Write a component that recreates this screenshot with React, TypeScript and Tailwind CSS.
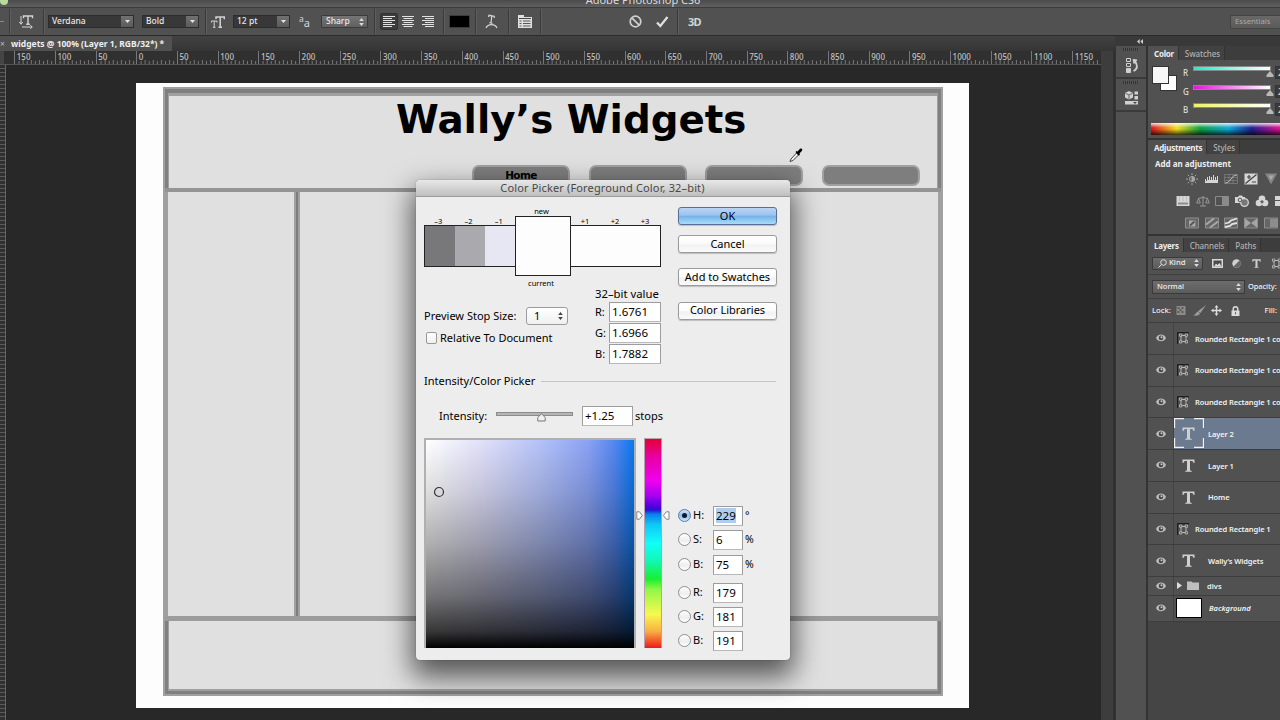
import React from "react";

const TICKS = [4.07, 8.14, 12.21, 16.28, 20.35, 24.42, 28.49, 32.56, 36.63];

function Sep({ className }: { className: string }) {
  return <div className={`h-[25px] w-[2px] shrink-0 border-l border-[#3a3a3a] bg-[#5e5e5e] ${className}`} />;
}

function Combo({ label, className }: { label: string; className: string }) {
  return (
    <div className={`flex h-[13px] shrink-0 items-center border border-[#2c2c2c] bg-[#383838] ${className}`}>
      <span className="flex-1 pl-[3px] text-[8.500px] font-medium leading-none text-[#e8e8e8]">{label}</span>
      <span className="flex h-full w-[12px] items-center justify-center bg-gradient-to-b from-[#717171] to-[#5b5b5b]">
        <svg width="5" height="3" viewBox="0 0 5 3"><path d="M0 0h5L2.5 3z" fill="#e6e6e6" /></svg>
      </span>
    </div>
  );
}

function UpDown({ fill = "#dcdcdc" }: { fill?: string }) {
  return (
    <svg width="5" height="8" viewBox="0 0 5 8" className="shrink-0">
      <path d="M2.5 0L4.8 3H.2zM2.5 8L.2 5h4.6z" fill={fill} />
    </svg>
  );
}

function Align({ kind }: { kind: "l" | "c" | "r" }) {
  const widths = [12, 9, 12, 9, 12, 9];
  return (
    <svg width="12" height="12" viewBox="0 0 12 12">
      {widths.map((w, i) => (
        <rect key={i} x={kind === "l" ? 0 : kind === "c" ? (12 - w) / 2 : 12 - w} y={i * 2} width={w} height="1" fill="#e2e2e2" />
      ))}
    </svg>
  );
}

function OptionsBar() {
  return (
    <div className="flex h-[28px] items-center border-b border-[#2b2b2b] bg-[#515151]">
      <div className="h-px w-[4px] bg-[#8c8c8c]" />
      <Sep className="ml-[5px]" />
      <svg className="ml-[8px] shrink-0" width="15" height="14" viewBox="0 0 15 14" fill="none" stroke="#d4d4d4">
        <path d="M4.5 3.200V1h9v2.200M9 1v8.500M7.200 9.300h3.600" strokeWidth="1.400" />
        <path d="M2 1v8M.3 7L2 9.300 3.700 7M3 12h10M11.300 10.300L13.300 12l-2 1.700" />
      </svg>
      <Sep className="ml-[9px]" />
      <Combo label="Verdana" className="ml-[3px] w-[86px]" />
      <Combo label="Bold" className="ml-[8px] w-[57px]" />
      <Sep className="ml-[6px]" />
      <svg className="ml-[4px] shrink-0" width="14" height="12" viewBox="0 0 14 12" fill="none" stroke="#d4d4d4">
        <path d="M5 3V1h8.300v2.300M9.200 1v10M7.500 11.300h3.500" strokeWidth="1.500" />
        <path d="M.5 6.500V5h5.500v1.500M3.200 5v6M2 11.300h2.500" />
      </svg>
      <Combo label="12 pt" className="ml-[8px] w-[57px]" />
      <div className="ml-[9px] flex w-[12px] shrink-0 items-center text-[8.500px] leading-none text-[#d4d4d4]">
        <span className="pb-[4px]">a</span><span className="pt-[2px] text-[11px]">a</span>
      </div>
      <div className="ml-[10px] flex h-[13px] w-[47px] shrink-0 items-center justify-between rounded-[1px] border border-[#3b3b3b] bg-gradient-to-b from-[#757575] to-[#606060] pl-[4px] pr-[3px]">
        <span className="text-[8.500px] font-medium leading-none text-[#e8e8e8]">Sharp</span>
        <UpDown />
      </div>
      <Sep className="ml-[6px]" />
      <div className="ml-[4px] flex h-[17px] w-[18px] shrink-0 items-center justify-center rounded-[2px] border border-[#303030] bg-[#3c3c3c]"><Align kind="l" /></div>
      <div className="ml-[4px] flex w-[13px]"><Align kind="c" /></div>
      <div className="ml-[7px] flex w-[13px]"><Align kind="r" /></div>
      <Sep className="ml-[8px]" />
      <div className="ml-[4px] h-[13px] w-[21px] shrink-0 border border-[#3c3c3c] bg-black" />
      <Sep className="ml-[5px]" />
      <svg className="ml-[8px] shrink-0" width="13" height="15" viewBox="0 0 13 15" fill="none" stroke="#d4d4d4" strokeWidth="1.200">
        <path d="M3.500 3L4 1.300l5.500 1M9.200 4l.3-1.700M6.800 2L6 9M4.500 8.700l3 .6M1 14c2-4.500 9-4.500 11 0" />
      </svg>
      <Sep className="ml-[10px]" />
      <svg className="ml-[8px] shrink-0" width="14" height="13" viewBox="0 0 14 13">
        <path d="M0 0h6v2h8v11H0z" fill="#e0e0e0" />
        <path d="M1 3.500h12" stroke="#484848" />
        <path d="M1.500 6h2M5 6h7.500M1.500 8.500h2M5 8.500h7.500M1.500 11h2M5 11h7.500" stroke="#585858" />
      </svg>
      <Sep className="ml-[8px]" />
      <svg className="ml-[87px] shrink-0" width="13" height="13" viewBox="0 0 13 13" fill="none" stroke="#d0d0d0" strokeWidth="1.700">
        <circle cx="6.500" cy="6.500" r="5.300" /><path d="M2.800 2.800l7.400 7.400" />
      </svg>
      <svg className="ml-[14px] shrink-0" width="13" height="12" viewBox="0 0 13 12" fill="none" stroke="#dedede" strokeWidth="2.300">
        <path d="M1 6.500l3.300 3.500L11.500 1" />
      </svg>
      <Sep className="ml-[8px]" />
      <span className="ml-[9px] w-[14px] text-[11px] font-bold leading-none tracking-[-0.8px] text-[#d4d4d4]">3D</span>
      <div className="ml-auto flex h-[14px] w-[50px] items-center rounded-l-[2px] border border-r-0 border-[#444] bg-gradient-to-b from-[#686868] to-[#5b5b5b] pl-[4px] text-[7.700px] leading-none text-[#aaa]">Essentials</div>
    </div>
  );
}

function Ruler() {
  return (
    <div className="flex h-[14px] w-[1101px] overflow-hidden border-b border-[#555] bg-[#303030]">
      <div className="w-[14.300px] shrink-0 border-l-4 border-[#444]" />
      {Array.from({ length: 27 }, (_, i) => (
        <div key={i} className="relative h-[14px] w-[40.700px] shrink-0 border-l border-[#777] pl-[1.500px] text-[8px] font-medium leading-[12px] text-[#c0c0c0]">
          {Math.abs((i - 3) * 50)}
          <svg className="absolute bottom-[1px] left-0" width="40" height="4" viewBox="0 0 40 4">
            {TICKS.map((x, k) => <rect key={k} x={x - 0.5} y={k % 2 ? 0 : 1} width="1" height="4" fill="#777" />)}
          </svg>
        </div>
      ))}
    </div>
  );
}

function NavButton({ label }: { label?: string }) {
  return (
    <div className="h-[21px] w-[98px] rounded-[7px] border-2 border-[#a0a0a0] bg-[#7e7e7f] pt-[2px] text-center font-['DejaVu_Sans',sans-serif] text-[10.500px] font-bold leading-[13px] tracking-[-0.6px] text-black">{label}</div>
  );
}

function Canvas() {
  return (
    <div className="ml-[130px] mt-[18px] h-[625px] w-[833px] bg-[#fdfdfd] pl-[27px] pt-[4px]">
      <div className="flex h-[609px] w-[780px] flex-col border-2 border-[#a0a0a0] bg-[#e0e0e0]">
        <div className="h-[99px] border-x-[3px] border-t-[4px] border-[#808080]">
          <div className="h-[95px] border-x-[1px] border-t-[3px] border-[#a0a0a0]">
            <h1 className="pl-[227px] pt-[1px] font-['DejaVu_Sans',sans-serif] text-[38.800px] font-bold leading-[46px] text-black">
              <span className="whitespace-nowrap">Wally’s Widgets</span>
            </h1>
            <div className="ml-[303px] mt-[22px] flex gap-[18.500px]">
              <NavButton label="Home" /><NavButton /><NavButton /><NavButton />
            </div>
          </div>
        </div>
        <div className="h-[4px] bg-[#949494]" />
        <div className="flex h-[424px] border-x-[3px] border-[#a0a0a0]">
          <div className="w-[126px]" />
          <div className="w-[6px] border-x-2 border-[#a0a0a0] bg-[#7e7e7e]" />
          <div className="flex-1" />
        </div>
        <div className="h-[5px] bg-[#9c9c9c]" />
        <div className="flex-1 border-x-[3px] border-b-[3px] border-[#808080]">
          <div className="h-full border-x-[1px] border-b-2 border-[#a0a0a0]" />
        </div>
      </div>
    </div>
  );
}

function Btn({ label, primary }: { label: string; primary?: boolean }) {
  return (
    <div className={`flex h-[18px] w-[99px] items-center justify-center rounded-[3px] border pb-[2px] text-[11px] leading-none text-black shadow-[0_1px_1px_rgba(0,0,0,.2)] ${primary ? "border-[#5a6f95] bg-[linear-gradient(#bcd3f4,#9cc3f0_45%,#74b1e8_50%,#a9dcf8)]" : "border-[#9b9b9b] bg-[linear-gradient(#fff,#fbfbfb_50%,#f1f1f1_55%,#fbfbfb)]"}`}>{label}</div>
  );
}

function Field({ value, className, selected }: { value: string; className: string; selected?: boolean }) {
  return (
    <div className={`flex h-[20px] items-center border-[1.500px] border-[#9c9c9c] border-b-[#b8b8b8] bg-white pl-[2px] text-[11.500px] leading-none text-black ${className}`}>
      <span className={selected ? "bg-[#b1cdee] py-[1px] leading-[13px]" : ""}>{value}</span>
    </div>
  );
}

function Stops({ labels, fills, className }: { labels: string[]; fills: string[]; className: string }) {
  return (
    <div className={`flex shrink-0 flex-col ${className}`}>
      <div className="flex h-[9px] text-[7.500px] leading-[11px] text-black">
        {labels.map((l) => <span key={l} className="flex-1 pr-[2px] text-center">{l}</span>)}
      </div>
      <div className="flex h-[42px] border-y border-[#222]">
        {fills.map((f, i) => <div key={i} className={`flex-1 ${f}`} />)}
      </div>
    </div>
  );
}

function Radio({ on }: { on?: boolean }) {
  return (
    <div className={`flex h-[13px] w-[13px] items-center justify-center rounded-full border ${on ? "border-[#5f7ba6] bg-[linear-gradient(#d3e4f8,#8fc0f0_50%,#c2eaff)]" : "border-[#8f8f8f] bg-[linear-gradient(#fff,#eee_60%,#fff)]"}`}>
      {on && <div className="h-[5px] w-[5px] rounded-full bg-[#101828]" />}
    </div>
  );
}

function Channel({ label, value, unit, on, className }: { label: string; value: string; unit?: string; on?: boolean; className?: string }) {
  return (
    <div className={`flex h-[20px] items-center ${className ?? ""}`}>
      <Radio on={on} />
      <span className="w-[22px] pb-[2px] pl-[2px] text-[11px] leading-none">{label}</span>
      <Field value={value} className="w-[30px]" selected={on} />
      <span className="pl-[2px] text-[10.500px] leading-none">{unit}</span>
    </div>
  );
}

function ColorPicker() {
  return (
    <div className="absolute left-[416px] top-[180px] h-[480px] w-[374px] rounded-[4px] bg-[#ededed] text-[11px] text-black shadow-[0_13px_28px_4px_rgba(0,0,0,.62),0_0_1px_rgba(0,0,0,.6)]">
      <div className="h-[17px] rounded-t-[4px] border-b border-[#9c9c9c] bg-gradient-to-b from-[#e8e8e8] to-[#bfbfbf] pr-[1px] text-center text-[11px] leading-[16px] tracking-[0.15px] text-[#484848]">Color Picker (Foreground Color, 32–bit)</div>
      <div className="flex h-[176px] pl-[8px]">
        <div className="w-[237px] shrink-0 pt-[10px]">
          <div className="flex h-[82px]">
            <Stops className="w-[91px] pt-[9px] [&>div:last-child]:border-l" labels={["–3", "–2", "–1"]} fills={["bg-[#78787b]", "bg-[#a9a9ae]", "bg-[#e7e7f3]"]} />
            <div className="flex w-[56px] shrink-0 flex-col text-center text-[7.500px] leading-[9px]">
              <span className="h-[9px] pr-[3px] leading-[9px]">new</span>
              <div className="h-[60px] border border-[#222] bg-[#fdfdfd]" />
              <span className="pr-[4px] pt-[3px]">current</span>
            </div>
            <Stops className="w-[90px] pt-[9px] [&>div:last-child]:border-r" labels={["+1", "+2", "+3"]} fills={["bg-[#fdfdfd]", "bg-[#fdfdfd]", "bg-[#fdfdfd]"]} />
          </div>
          <div className="flex">
            <div className="w-[171px] shrink-0 pt-[18px]">
              <div className="flex h-[18px] items-center">
                <span className="w-[102px] whitespace-nowrap pb-[2px] leading-none">Preview Stop Size:</span>
                <div className="flex h-[18px] w-[42px] items-center justify-between rounded-[3px] border border-[#9c9c9c] bg-gradient-to-b from-white to-[#f0f0f0] pl-[7px] pr-[4px] leading-none"><span className="pb-[1px]">1</span><UpDown fill="#444" /></div>
              </div>
              <div className="mt-[7px] flex h-[12px] items-center">
                <div className="ml-[2px] h-[12px] w-[11px] rounded-[2px] border border-[#999] bg-gradient-to-b from-white to-[#f0f0f0]" />
                <span className="whitespace-nowrap pb-[2px] pl-[3px] leading-none">Relative To Document</span>
              </div>
            </div>
            <div className="flex flex-col">
              <span className="h-[12px] whitespace-nowrap text-[11.300px] leading-[9px]">32–bit value</span>
              {[["R:", "1.6761"], ["G:", "1.6966"], ["B:", "1.7882"]].map(([k, v]) => (
                <div key={k} className="flex h-[21px] items-center"><span className="w-[14px] leading-none">{k}</span><Field value={v} className="w-[52px]" /></div>
              ))}
            </div>
          </div>
        </div>
        <div className="flex flex-col pl-[17px] pt-[10px]">
          <Btn label="OK" primary />
          <div className="mt-[10px]"><Btn label="Cancel" /></div>
          <div className="mt-[15px]"><Btn label="Add to Swatches" /></div>
          <div className="mt-[15.500px]"><Btn label="Color Libraries" /></div>
        </div>
      </div>
      <div className="flex h-[16px] items-center pl-[8px] pr-[14px]">
        <span className="w-[117px] whitespace-nowrap pb-[2px] leading-none">Intensity/Color Picker</span>
        <div className="h-px flex-1 bg-[#c4c4c4]" />
      </div>
      <div className="mt-[17px] flex h-[20px] items-center pl-[23px]">
        <span className="w-[57px] pb-[2px] leading-none">Intensity:</span>
        <div className="relative mb-[4px] h-[4px] w-[77px] border border-[#8c8c8c] bg-[#b5b5b5]">
          <svg className="absolute left-[40px] top-0" width="9" height="9" viewBox="0 0 9 9"><path d="M4.500.7L8.200 4.500V8H.8V4.500z" fill="#f0f0f0" stroke="#777" /></svg>
        </div>
        <Field value="+1.25" className="ml-[9px] w-[51px]" />
        <span className="pb-[2px] pl-[2px] leading-none">stops</span>
      </div>
      <div className="mt-[12px] flex h-[211px] pl-[8px]">
        <div className="relative h-[210px] w-[212px] border-2 border-b-0 border-[#b0b0b0] bg-[linear-gradient(rgba(0,0,0,0),rgba(0,0,0,.13)_25%,rgba(0,0,0,.31)_50%,rgba(0,0,0,.54)_75%,rgba(0,0,0,.78)_92%,#000),linear-gradient(90deg,#fff,#dfdffa_28%,#b4c2f8_55%,#8aa2f4_78%,#5788f0_90%,#0a78f0)]">
          <svg className="absolute left-[7px] top-[46px]" width="12" height="12" viewBox="0 0 12 12"><circle cx="6" cy="6" r="4.500" fill="none" stroke="#333" strokeWidth="1.200" /></svg>
        </div>
        <svg className="mt-[73px] shrink-0" width="8" height="9" viewBox="0 0 8 9"><path d="M.8.800h2.700L6.300 4.500 3.500 8.200H.8z" fill="#fff" stroke="#777" strokeWidth=".9" /></svg>
        <div className="h-[210px] w-[18px] border border-b-0 border-[#b9a0b0] bg-[linear-gradient(#e60030,#e8009c_8%,#f000f0_20%,#a800f0_27%,#5500e0_32%,#2a10d8_34%,#0880e8_36%,#10c8f8_41%,#10fff8_50%,#10f8b8_58%,#18f030_67%,#90f848_72%,#f8f850_84%,#f8b040_92%,#f01818)]" />
        <svg className="mt-[73px] shrink-0" width="8" height="9" viewBox="0 0 8 9"><path d="M7 .800H4.300L1.500 4.500l2.800 3.700H7z" fill="#fff" stroke="#777" strokeWidth=".9" /></svg>
        <div className="pl-[8px] pt-[67.500px]">
          <Channel label="H:" value="229" unit="°" on />
          <Channel label="S:" value="6" unit="%" className="mt-[4px]" />
          <Channel label="B:" value="75" unit="%" className="mt-[5px]" />
          <Channel label="R:" value="179" className="mt-[8px]" />
          <Channel label="G:" value="181" className="mt-[4px]" />
          <Channel label="B:" value="191" className="mt-[4px]" />
        </div>
      </div>
    </div>
  );
}

function Tabs({ items }: { items: string[] }) {
  return (
    <div className="flex h-[14px] shrink-0 bg-[#3d3d3d] text-[8px] leading-[15px]">
      {items.map((t, i) => (
        <span key={t} className={`whitespace-nowrap border-r border-[#333] pl-[6px] ${i === 0 ? "bg-[#515151] pr-[4px] font-bold tracking-[-0.25px] text-[#eee]" : "bg-[#424242] pr-[4px] font-medium tracking-[-0.1px] text-[#b0b0b0]"}`}>{t}</span>
      ))}
    </div>
  );
}

function Slider({ label, grad }: { label: string; grad: string }) {
  return (
    <div className="flex h-[18.700px] items-start text-[8px] text-[#ddd]">
      <span className="w-[10px] pt-[2px] font-medium leading-[9px]">{label}</span>
      <div className="w-[78px] shrink-0">
        <div className={`h-[5px] border border-[#888] ${grad}`} />
        <svg className="ml-[73px]" width="8" height="6" viewBox="0 0 8 6"><path d="M4 0l3.500 4v2h-7V4z" fill="#b8b8b8" /></svg>
      </div>
      <div className="ml-[4px] h-[13px] w-[12px] shrink-0 border border-[#333] bg-[#3b3b3b] pl-[2px] leading-[11px]">2</div>
    </div>
  );
}

function AdjIcon({ n }: { n: number }) {
  const c = "#d6d6d6";
  const d = "#8b8b8b";
  return (
    <svg width="14" height="12" viewBox="0 0 14 12" fill="none" className="shrink-0">
      {n === 0 && <g stroke="#a8a8a8"><circle cx="7" cy="6" r="2.500" /><path d="M7 3.500a2.500 2.500 0 0 1 0 5z" fill="#a8a8a8" /><path d="M7 0v2M7 10v2M1 6h2M11 6h2M2.800 1.800l1.400 1.400M9.800 8.800l1.400 1.400M2.800 10.200l1.400-1.400M9.800 3.200l1.400-1.400" /></g>}
      {n === 1 && <path d="M0 10V6h1v2h1V4h1v3h1V3h1v4h1V4h1v3h1V2h1v5h1V4h1v3h1V3h1v7z" fill={c} />}
      {n === 2 && <g stroke={d}><path d="M.5 1.500h13v9H.5zM.5 4.500h13M.5 7.500h13M5 1.500v9M9 1.500v9" strokeWidth=".6" /><path d="M1 10c6 0 6-8 12-8" stroke="#bbb" /></g>}
      {n === 3 && <g><path d="M.5.500h13v11H.5z" fill={c} /><path d="M1.500 10.500l11-9M3 4h4M5 2v4M8 9h4" stroke="#444" strokeWidth="1.200" /></g>}
      {n === 4 && <g><path d="M1 .500h12L7 11.500z" fill="#858585" /><path d="M4.500 2.500h5L7 7.500z" fill="#aaa" /></g>}
      {n === 5 && <g><path d="M.5 1h13v10H.5z" fill={c} /><path d="M3.500 6V1M7 6V1M10.500 6V1" stroke="#bbb" /><path d="M2 8.500h10" stroke="#8c8c8c" strokeWidth="2" /></g>}
      {n === 6 && <path d="M7 1v10M4 11h6M2 3.500l5-1 5 1M2.500 3.500L.7 8h3.600zM11.500 3.500L9.700 8h3.600z" stroke="#989898" />}
      {n === 7 && <g><path d="M.5 1.500h13v9H.5z" stroke={d} /><path d="M7 1.500h6v9H7z" fill={d} /></g>}
      {n === 8 && <g><path d="M0 2h3l1-1.500h3L8 2h2v6H0z" fill={c} /><circle cx="9.500" cy="7.500" r="3.800" fill="#777" stroke={c} strokeWidth="1.300" /><circle cx="5" cy="5" r="1.800" stroke="#555" /></g>}
      {n === 9 && <g fill={c}><circle cx="7" cy="3.700" r="3.300" /><circle cx="4" cy="8" r="3.300" /><circle cx="10" cy="8" r="3.300" /><path d="M5 6.500l2-1.500 2 1.500L7 9z" fill="#666" /></g>}
      {n === 10 && <path d="M1 1h5v4H1zM7 1h5v4H7zM1 6h5v5H1zM7 6h5v5H7z" fill={c} />}
      {n > 10 && <path d="M.5 1h13v10H.5z" stroke="#8f8f8f" fill="#666" />}
      {n === 11 && <g><path d="M4 3.500h6.500v6H4z" fill="#aaa" /><path d="M5 8.500l4.500-4" stroke="#555" strokeWidth="1.800" /></g>}
      {n === 12 && <path d="M1 7.500L9 1.500M5 10.500l8-6" stroke="#a8a8a8" strokeWidth="2" />}
      {n === 13 && <path d="M1 6.500l4-1 2-2 6-2M1 10l5-1 2-2 5-1" stroke="#e2e2e2" strokeWidth="1.800" />}
      {n === 14 && <path d="M1 1.500L7 6l6-4.500v9L7 6l-6 4.500z" fill="#a5a5a5" />}
      {n === 15 && <path d="M6 2h7v8H6z" fill="#8d8d8d" />}
    </svg>
  );
}

function Eye() {
  return (
    <svg width="10" height="8" viewBox="0 0 10 8" className="shrink-0">
      <path d="M0 4C2-.6 8-.6 10 4 8 8.300 2 8.300 0 4z" fill="#bdbdbd" /><circle cx="5" cy="3.900" r="2.300" fill="#484848" /><circle cx="5.500" cy="3.300" r="1" fill="#ccc" />
    </svg>
  );
}

function EyeCell() {
  return <div className="flex h-full w-[26px] shrink-0 items-center justify-center border-r border-[#434343]"><Eye /></div>;
}

function BigT({ size }: { size: number }) {
  return (
    <svg width={size} height={size} viewBox="0 0 13 13" className="shrink-0">
      <path d="M.5.500h12v3.500h-1C11.200 2.300 10.500 2 8 2v8.800c0 .8.500 1 1.800 1.200v.7H3.200V12c1.300-.2 1.800-.4 1.800-1.200V2c-2.500 0-3.200.3-3.500 2h-1z" fill="#cfcfcf" />
    </svg>
  );
}

function ShapeIcon({ dark }: { dark?: boolean }) {
  return (
    <svg width="12" height="12" viewBox="0 0 12 12" className="shrink-0" fill="none">
      {dark && <path d="M.5 12V.5H12" stroke="#1e1e1e" strokeWidth="1.300" />}
      <path d="M4 3.500h5v6H4z" stroke="#b8b8b8" />
      <path d="M2.500 2h2.300v2.300H2.500zM8.200 2h2.300v2.300H8.200zM2.500 8.700h2.300V11H2.500zM8.200 8.700h2.300V11H8.200z" fill="#565656" stroke="#c8c8c8" strokeWidth=".7" />
    </svg>
  );
}

function Layer({ name, kind, active }: { name: string; kind: "shape" | "text"; active?: boolean }) {
  return (
    <div className="flex h-[31.750px] shrink-0 items-center border-b border-[#3d3d3d]">
      <EyeCell />
      <div className={`flex h-full flex-1 items-center ${active ? "bg-[#6b7a8f]" : ""}`}>
        {kind === "shape" ? (
          <div className="w-[21px] shrink-0 pl-[3px]"><ShapeIcon dark /></div>
        ) : (
          <div className="relative flex h-full w-[34px] shrink-0 items-center pl-[8px]">
            {active && (
              <svg className="absolute left-0 top-0" width="30" height="30" viewBox="0 0 30 30" fill="none"><path d="M.5 10V.5H10M20 .5h9.500V10M29.500 20v9.500H20M10 29.500H.5V20" stroke="#f2f2f2" strokeWidth="1.300" /></svg>
            )}
            <BigT size={13} />
          </div>
        )}
        <span className="whitespace-nowrap pt-[2px] text-[7.500px] font-semibold leading-none tracking-[-0.1px] text-[#f2f2f2]">{name}</span>
      </div>
    </div>
  );
}

function Panels() {
  return (
    <div className="flex w-[132px] shrink-0 flex-col overflow-hidden bg-[#515151]">
      <Tabs items={["Color", "Swatches"]} />
      <div className="flex h-[63px] shrink-0 pl-[4px] pt-[6px]">
        <div className="relative h-[26px] w-[31px] shrink-0">
          <div className="absolute left-[8px] top-[9px] h-[16px] w-[17px] border border-[#333] bg-white" />
          <div className="absolute left-0 top-0 h-[18px] w-[17px] border border-[#333] bg-[#f7f7f7]" />
        </div>
        <div className="shrink-0">
          <Slider label="R" grad="bg-[linear-gradient(90deg,#18f0d0,#fff)]" />
          <Slider label="G" grad="bg-[linear-gradient(90deg,#e018d8,#fff)]" />
          <Slider label="B" grad="bg-[linear-gradient(90deg,#f0f060,#fff)]" />
        </div>
      </div>
      <div className="ml-[3px] h-[12px] shrink-0 bg-[linear-gradient(rgba(255,255,255,.85),rgba(255,255,255,0)_40%,rgba(0,0,0,0)_50%,rgba(0,0,0,.75)),linear-gradient(90deg,#e01020,#f0e020_20%,#10a040_38%,#10a8d8_60%,#202090_78%,#e01090)]" />
      <div className="h-[5px] shrink-0 border-b-2 border-[#333]" />
      <Tabs items={["Adjustments", "Styles"]} />
      <div className="h-[82px] shrink-0 border-b-2 border-[#333]">
        <div className="h-[19px] pl-[7px] text-[8px] font-bold leading-[19px] text-[#eee]">Add an adjustment</div>
        <div className="flex gap-[5.700px] pl-[37px]">{[0, 1, 2, 3, 4].map((n) => <AdjIcon key={n} n={n} />)}</div>
        <div className="mt-[10px] flex gap-[5.700px] pl-[28px]">{[5, 6, 7, 8, 9, 10].map((n) => <AdjIcon key={n} n={n} />)}</div>
        <div className="mt-[10px] flex gap-[5.700px] pl-[37px]">{[11, 12, 13, 14, 15].map((n) => <AdjIcon key={n} n={n} />)}</div>
      </div>
      <div className="h-[2px] shrink-0" />
      <Tabs items={["Layers", "Channels", "Paths"]} />
      <div className="flex h-[23px] shrink-0 items-center border-b border-[#404040] pl-[4px]">
        <div className="flex h-[13px] w-[51px] shrink-0 items-center rounded-[1px] border border-[#3a3a3a] bg-gradient-to-b from-[#6d6d6d] to-[#5c5c5c] pl-[5px] pr-[3px] text-[7.700px] font-medium leading-none text-[#eee]">
          <svg width="9" height="9" viewBox="0 0 9 9" fill="none" stroke="#ddd" className="mr-[2px]"><circle cx="5.500" cy="3.500" r="2.800" /><path d="M3.500 5.500L.5 8.500" /></svg>
          <span className="flex-1">Kind</span><UpDown />
        </div>
        <svg className="ml-[9px] shrink-0" width="11" height="9" viewBox="0 0 11 9"><path d="M0 0h11v9H0z" fill="#d8d8d8" /><path d="M1.500 1.500h8v6h-8z" fill="#4a4a4a" /><path d="M2 7.500l2-3 1.500 1.500L7.500 4l2 3.500z" fill="#ddd" /></svg>
        <svg className="ml-[9px] shrink-0" width="9" height="9" viewBox="0 0 9 9"><circle cx="4.500" cy="4.500" r="4.200" fill="#d0d0d0" /><path d="M1.600 7.400A4 4 0 0 0 7.400 1.600z" fill="#666" /></svg>
        <div className="ml-[11px] shrink-0"><BigT size={9} /></div>
        <div className="ml-[9px] shrink-0"><ShapeIcon /></div>
      </div>
      <div className="flex h-[24px] shrink-0 items-center border-b border-[#404040] pl-[4px]">
        <div className="flex h-[14px] w-[93px] shrink-0 items-center justify-between border border-[#3a3a3a] bg-gradient-to-b from-[#6d6d6d] to-[#5c5c5c] pl-[4px] pr-[3px] text-[7.500px] font-medium leading-none text-[#eee]">Normal<UpDown /></div>
        <span className="pl-[3px] pt-[1px] text-[7.500px] font-medium leading-none tracking-[-0.1px] text-[#eee]">Opacity:</span>
      </div>
      <div className="flex h-[24px] shrink-0 items-center border-b border-[#3d3d3d] pl-[4px] text-[7.700px] font-medium leading-none text-[#eee]">
        <span className="w-[24px]">Lock:</span>
        <svg width="10" height="9" viewBox="0 0 9 9"><path d="M0 0h9v9H0z" fill="#8c8c8c" /><path d="M1 1h2v2H1zM5 1h2v2H5zM3 3h2v2H3zM1 5h2v2H1zM5 5h2v2H5z" fill="#5c5c5c" /></svg>
        <svg className="ml-[7px]" width="13" height="11" viewBox="0 0 13 11"><path d="M13 0L7.500 8 5 6.200zM5 6.500l2 2C6 10.800 3 11 0 10.300 3 9.500 3 7 5 6.500z" fill="#9c9c9c" /></svg>
        <svg className="ml-[5px]" width="11" height="11" viewBox="0 0 11 11"><path d="M5.500 0L7.500 2.500h-1.300v2.300h2.300V3.500L11 5.500l-2.500 2V6.200H6.200v2.300h1.300L5.500 11 3.500 8.500h1.300V6.200H2.500v1.300L0 5.500l2.500-2v1.300h2.300V2.500H3.500z" fill="#dcdcdc" /></svg>
        <svg className="ml-[9px]" width="9" height="10" viewBox="0 0 9 10"><path d="M2.200 5V3a2.300 2.300 0 0 1 4.600 0v2" fill="none" stroke="#dcdcdc" strokeWidth="1.400" /><path d="M.5 4.500h8V10h-8z" fill="#dcdcdc" /><path d="M4 6.200h1v2H4z" fill="#555" /></svg>
        <span className="ml-auto pr-[3px]">Fill:</span>
      </div>
      <Layer name="Rounded Rectangle 1 copy" kind="shape" />
      <Layer name="Rounded Rectangle 1 copy" kind="shape" />
      <Layer name="Rounded Rectangle 1 copy" kind="shape" />
      <Layer name="Layer 2" kind="text" active />
      <Layer name="Layer 1" kind="text" />
      <Layer name="Home" kind="text" />
      <Layer name="Rounded Rectangle 1" kind="shape" />
      <Layer name="Wally’s Widgets" kind="text" />
      <div className="flex h-[18.500px] shrink-0 items-center border-b border-[#3d3d3d]">
        <EyeCell />
        <svg className="ml-[3px]" width="22" height="9" viewBox="0 0 22 9"><path d="M0 1l5 3.500L0 8z" fill="#ddd" /><path d="M10 .500h4.500l1 1H22V9H10z" fill="#bfbfbf" /></svg>
        <span className="pl-[8px] pt-[1px] text-[7.500px] font-semibold leading-none text-[#f2f2f2]">divs</span>
      </div>
      <div className="flex h-[26.500px] shrink-0 items-center border-b border-[#3d3d3d]">
        <EyeCell />
        <div className="ml-[2px] h-[20px] w-[26px] border border-black bg-white" />
        <span className="pl-[7px] text-[7.500px] font-semibold italic leading-none text-[#f2f2f2]">Background</span>
      </div>
      <div className="flex-1 bg-[#454545]" />
    </div>
  );
}

function Grip() {
  return <div className="ml-[7px] h-[3px] w-[16px] bg-[repeating-linear-gradient(90deg,#333_0_1px,#555_1px_2px)]" />;
}

export default function App() {
  return (
    <div className="relative flex h-[720px] w-[1280px] flex-col overflow-hidden bg-[#282828] font-['Noto_Sans',sans-serif]">
      <div className="h-[8px] overflow-hidden border-b border-[#3c3c3c] bg-gradient-to-b from-[#4b4b4b] to-[#606060]">
        <div className="relative flex justify-center pl-[6px]">
          <div className="absolute left-0 top-[-4px] h-[9px] w-[8px] rounded-full bg-[#b6dd9a]" />
          <span className="-mt-[7px] text-[11px] leading-[14px] text-[#dcdcdc]">Adobe Photoshop CS6</span>
        </div>
      </div>
      <OptionsBar />
      <div className="flex h-[684px]">
        <div className="flex w-[1115px] flex-col">
          <div className="flex h-[15px] bg-gradient-to-b from-[#424242] to-[#353535]">
            <div className="flex h-full w-[172px] items-center bg-[#515151] pt-[2px] text-[8.500px] font-bold leading-none text-[#eee]">
              <span className="w-[11px] font-normal text-[#bbb]">×</span>
              <span className="whitespace-nowrap">widgets @ 100% (Layer 1, RGB/32*) *</span>
            </div>
          </div>
          <div className="flex flex-1">
            <div className="w-[1101px]">
              <Ruler />
              <div className="flex h-[655px]">
                <div className="w-[6px] shrink-0 border-r border-[#666] bg-[repeating-linear-gradient(#303030_0_3px,#5a5a5a_3px_4px)]" />
                <Canvas />
              </div>
            </div>
            <div className="w-[14px] border-r-2 border-[#303030] bg-[#3d3d3d]" />
          </div>
        </div>
        <div className="flex w-[165px] flex-col">
          <div className="flex h-[10px] items-center bg-[#393939] pl-[22px]">
            <svg width="6" height="5" viewBox="0 0 6 5"><path d="M2.700 0v5L0 2.500zM6 0v5L3.300 2.500z" fill="#ccc" /></svg>
          </div>
          <div className="flex flex-1 bg-[#333]">
            <div className="mr-[2px] flex w-[31px] shrink-0 flex-col border-l border-[#333] bg-[#515151]">
              <div className="h-[33px] border-b-2 border-[#3a3a3a] pt-[2px]">
                <Grip />
                <svg className="ml-[10px] mt-[7px]" width="13" height="15" viewBox="0 0 13 15" fill="none" stroke="#d0d0d0"><path d="M.5.500h4v3h-4zM.5 5.500h4v3h-4z" /><path d="M.5 10.500h4v4h-4z" fill="#d0d0d0" /><path d="M7.500 13c4-2 5-6 1-10" strokeWidth="1.800" /><path d="M7 1.500l4 .5-3 3.500z" fill="#d0d0d0" /></svg>
              </div>
              <div className="h-[33px] border-b-2 border-[#3a3a3a] pt-[2px]">
                <Grip />
                <svg className="ml-[9px] mt-[7px]" width="13" height="14" viewBox="0 0 13 14"><path d="M4 0l4 2v4.500l-4 2-4-2V2z" fill="#d0d0d0" /><path d="M.5 2.300L4 4l3.500-1.700M4 4v4" stroke="#666" fill="none" /><path d="M9.500.500H13v3H9.500zM9.500 5H13v3.500H9.500z" fill="#d0d0d0" /><path d="M0 10h13v3.500H0z" fill="#d0d0d0" /><path d="M8 11h4l-2 2z" fill="#444" /></svg>
              </div>
            </div>
            <Panels />
          </div>
        </div>
      </div>
      <ColorPicker />
      <svg className="absolute left-[789px] top-[148px]" width="14" height="15" viewBox="0 0 14 15">
        <path d="M1 13.500L2 11l5.500-6 2 2L4 12.500z" fill="#eee" stroke="#333" strokeWidth=".9" />
        <path d="M6.500 4l1-1 1 .5L11 .800c2-.8 2.800.7 2 1.900L10.500 5.500l.4 1.200-1 1z" fill="#000" />
      </svg>
    </div>
  );
}
